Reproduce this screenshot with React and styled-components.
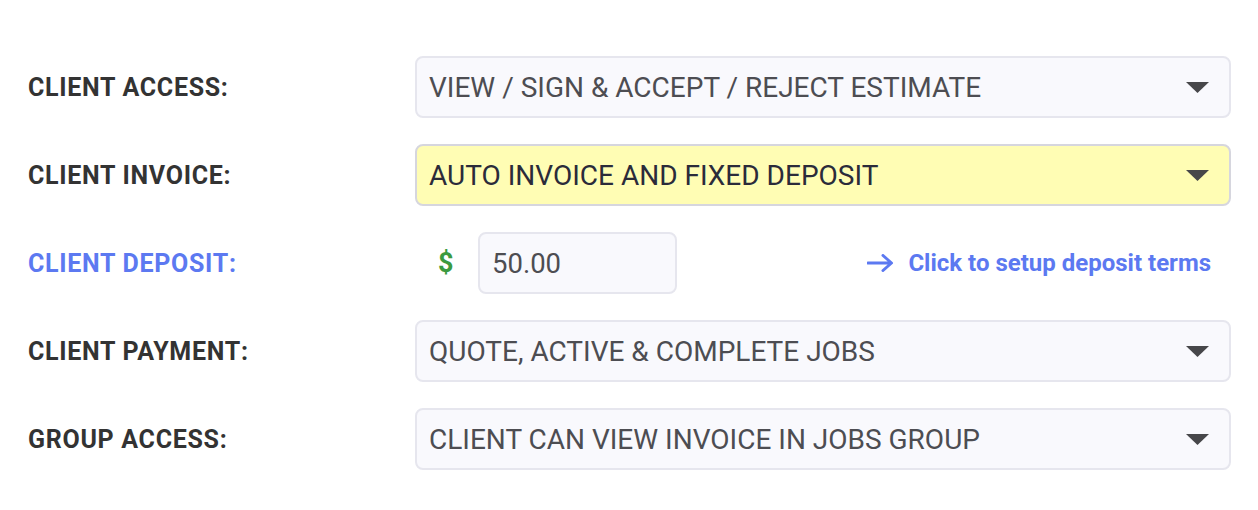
import React from 'react';
import styled, { createGlobalStyle } from 'styled-components';

const GlobalStyle = createGlobalStyle`
  body {
    margin: 0;
    background: #ffffff;
    font-family: Roboto, "Liberation Sans", Arial, sans-serif;
  }
`;

const Form = styled.div`
  display: grid;
  grid-template-columns: 387px 816px;
  grid-auto-rows: 62px;
  row-gap: 26px;
  padding: 56px 0 0 28px;
`;

const Label = styled.div`
  display: flex;
  align-items: center;
  font-size: 25px;
  font-weight: 700;
  letter-spacing: 0.7px;
  text-transform: uppercase;
  color: ${p => (p.$accent ? '#5c79f1' : '#333333')};
`;

const Select = styled.div`
  box-sizing: border-box;
  display: flex;
  align-items: center;
  justify-content: space-between;
  padding: 0 20px 0 12px;
  border-radius: 8px;
  border: 2px solid ${p => (p.$highlight ? '#d6d6de' : '#e6e6ee')};
  background: ${p => (p.$highlight ? '#fffdb4' : '#f9f9fd')};
  color: ${p => (p.$highlight ? '#2b2b3a' : '#4d4d52')};
  font-size: 28px;
  white-space: nowrap;
`;

const Caret = styled.svg`
  width: 23px;
  height: 11px;
  flex-shrink: 0;
`;

const DepositRow = styled.div`
  display: flex;
  align-items: center;
  padding: 0 20px 0 23px;
`;

const Dollar = styled.span`
  color: #3b9a40;
  font-size: 27px;
  font-weight: 700;
  width: 40px;
`;

const AmountInput = styled.div`
  box-sizing: border-box;
  width: 199px;
  height: 62px;
  display: flex;
  align-items: center;
  padding-left: 12px;
  border-radius: 8px;
  border: 2px solid #e6e6ee;
  background: #f9f9fd;
  color: #4d4d52;
  font-size: 27.5px;
`;

const SetupLink = styled.a`
  margin-left: auto;
  display: flex;
  align-items: center;
  gap: 14px;
  color: #5c79f1;
  font-size: 24px;
  font-weight: 700;
  text-decoration: none;
  cursor: pointer;
`;

const Arrow = styled.svg`
  width: 27px;
  height: 18px;
`;

const DropCaret = () => (
  <Caret viewBox="0 0 23 11">
    <path d="M0 0 H23 L11.5 11 Z" fill="#47474a" />
  </Caret>
);

const rows = [
  { label: 'Client Access:', value: 'VIEW / SIGN & ACCEPT / REJECT ESTIMATE' },
  { label: 'Client Invoice:', value: 'AUTO INVOICE AND FIXED DEPOSIT', highlight: true },
  { label: 'Client Deposit:', deposit: true },
  { label: 'Client Payment:', value: 'QUOTE, ACTIVE & COMPLETE JOBS' },
  { label: 'Group Access:', value: 'CLIENT CAN VIEW INVOICE IN JOBS GROUP' },
];

export default function App() {
  return (
    <>
      <GlobalStyle />
      <Form>
        {rows.map(row => (
          <React.Fragment key={row.label}>
            <Label $accent={row.deposit}>{row.label}</Label>
            {row.deposit ? (
              <DepositRow>
                <Dollar>$</Dollar>
                <AmountInput>50.00</AmountInput>
                <SetupLink>
                  <Arrow viewBox="0 0 27 18">
                    <path d="M1 9 H24 M16 1.5 L24.5 9 L16 16.5" fill="none" stroke="#5c79f1" strokeWidth="3" strokeLinecap="round" strokeLinejoin="round" />
                  </Arrow>
                  Click to setup deposit terms
                </SetupLink>
              </DepositRow>
            ) : (
              <Select $highlight={row.highlight}>
                {row.value}
                <DropCaret />
              </Select>
            )}
          </React.Fragment>
        ))}
      </Form>
    </>
  );
}
